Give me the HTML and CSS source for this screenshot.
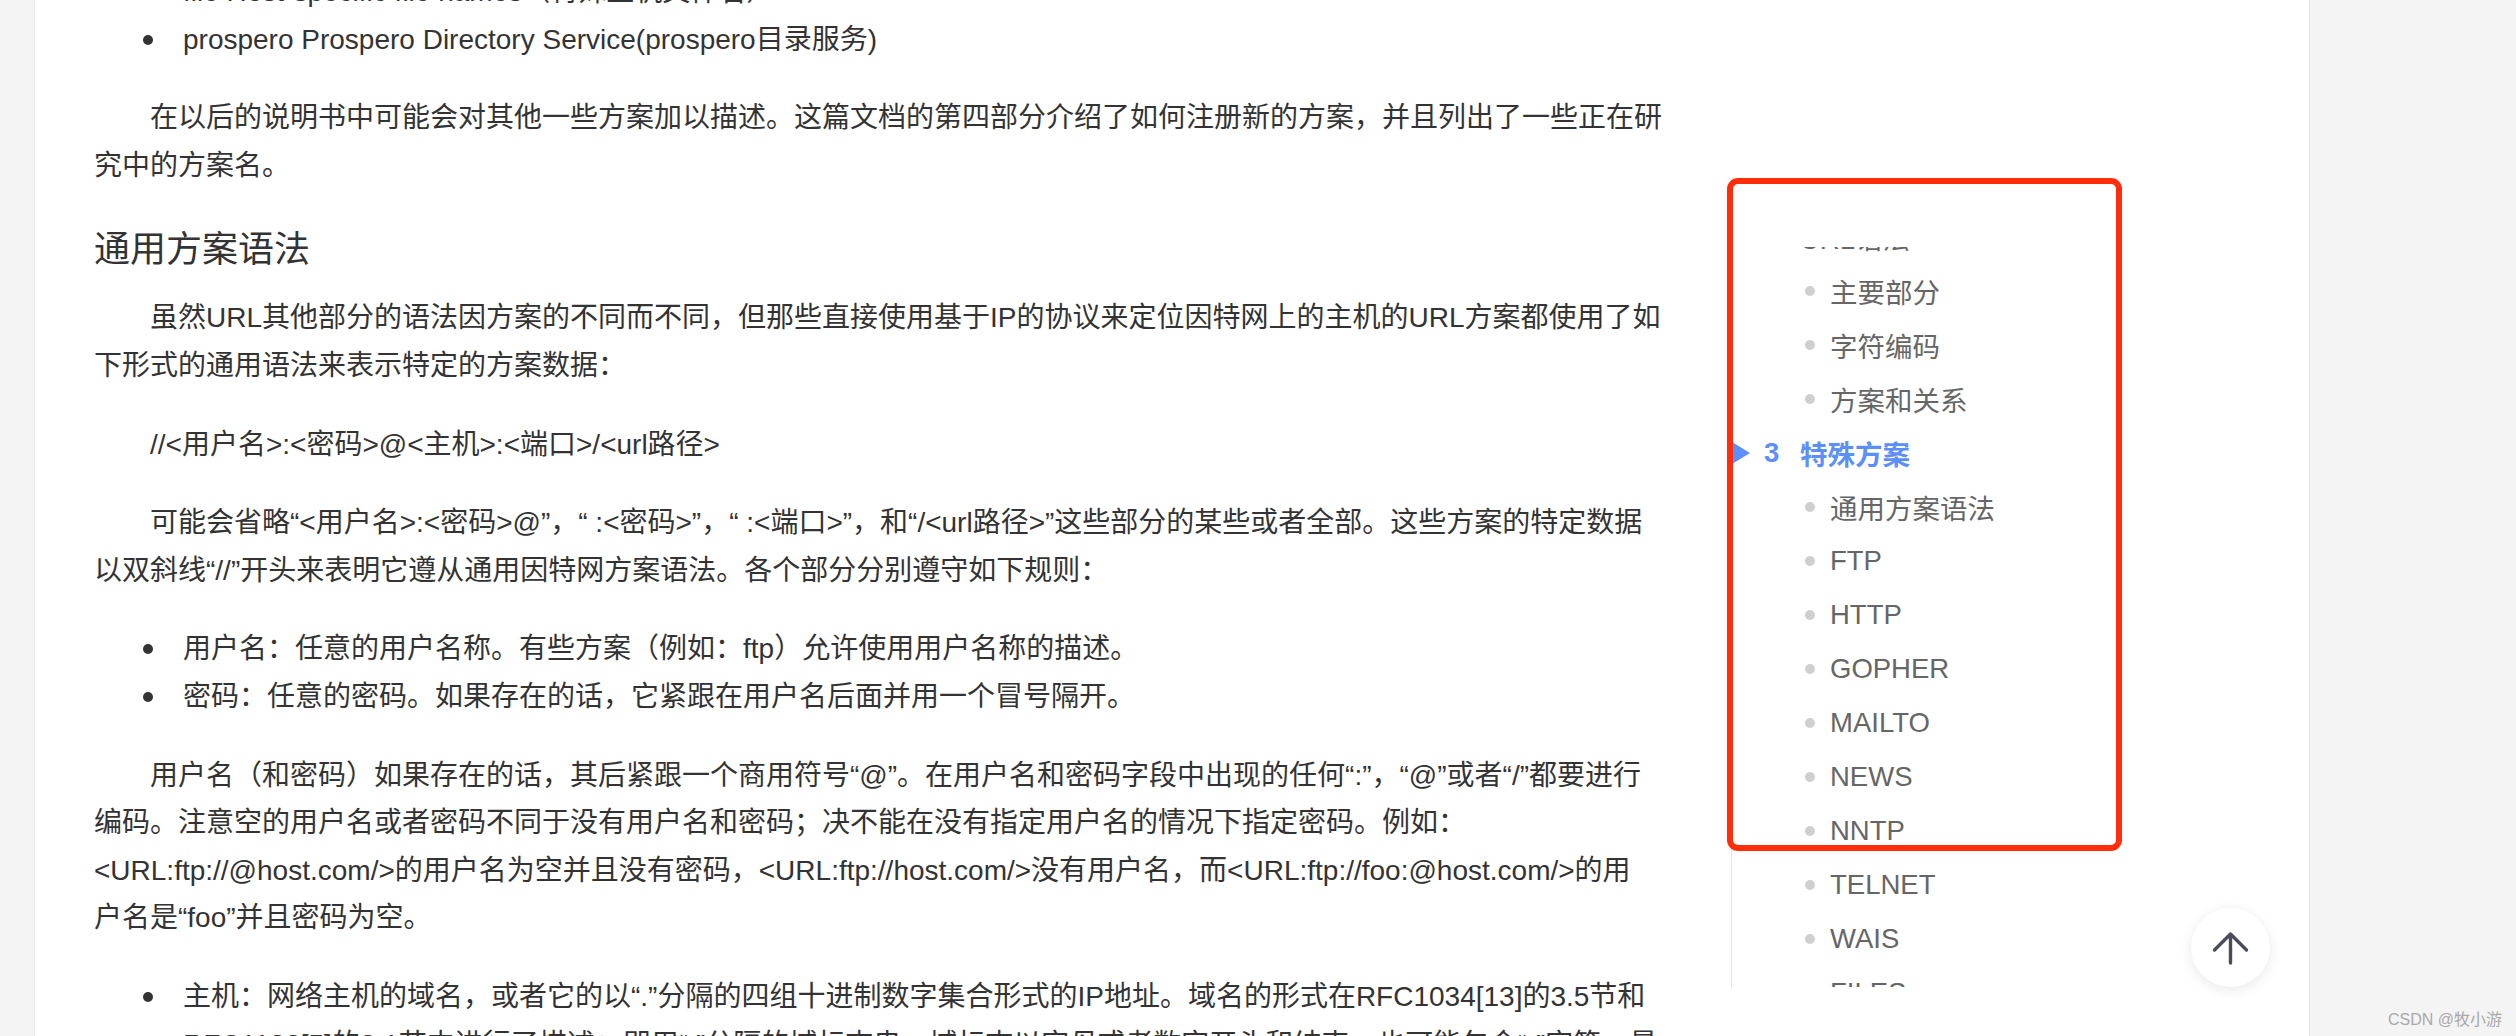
FILE: index.html
```html
<!DOCTYPE html>
<html lang="zh-CN">
<head>
<meta charset="utf-8">
<title>通用方案语法</title>
<link rel="stylesheet" href="styles.css">
</head>
<body>
<div class="page">
  <main class="panel">
    <article class="article">
      <ul class="list list-top">
        <li><span>file Host-specific file names（特殊主机文件名）</span></li>
        <li><span>prospero Prospero Directory Service(prospero目录服务)</span></li>
      </ul>
      <p class="para">在以后的说明书中可能会对其他一些方案加以描述。这篇文档的第四部分介绍了如何注册新的方案，并且列出了一些正在研<br>究中的方案名。</p>
      <h2 class="heading">通用方案语法</h2>
      <p class="para">虽然URL其他部分的语法因方案的不同而不同，但那些直接使用基于IP的协议来定位因特网上的主机的URL方案都使用了如<br>下形式的通用语法来表示特定的方案数据：</p>
      <p class="para">//&lt;用户名&gt;:&lt;密码&gt;@&lt;主机&gt;:&lt;端口&gt;/&lt;url路径&gt;</p>
      <p class="para">可能会省略“&lt;用户名&gt;:&lt;密码&gt;@”，“ :&lt;密码&gt;”，“ :&lt;端口&gt;”，和“/&lt;url路径&gt;”这些部分的某些或者全部。这些方案的特定数据<br>以双斜线“//”开头来表明它遵从通用因特网方案语法。各个部分分别遵守如下规则：</p>
      <ul class="list">
        <li><span>用户名：任意的用户名称。有些方案（例如：ftp）允许使用用户名称的描述。</span></li>
        <li><span>密码：任意的密码。如果存在的话，它紧跟在用户名后面并用一个冒号隔开。</span></li>
      </ul>
      <p class="para">用户名（和密码）如果存在的话，其后紧跟一个商用符号“@”。在用户名和密码字段中出现的任何“:”，“@”或者“/”都要进行<br>编码。注意空的用户名或者密码不同于没有用户名和密码；决不能在没有指定用户名的情况下指定密码。例如：<br>&lt;URL:ftp://@host.com/&gt;的用户名为空并且没有密码，&lt;URL:ftp://host.com/&gt;没有用户名，而&lt;URL:ftp://foo:@host.com/&gt;的用<br>户名是“foo”并且密码为空。</p>
      <ul class="list">
        <li><span>主机：网络主机的域名，或者它的以“.”分隔的四组十进制数字集合形式的IP地址。域名的形式在RFC1034[13]的3.5节和<br>RFC1123[5]的2.1节中进行了描述：即用“.”分隔的域标志串，域标志以字母或者数字开头和结束，也可能包含“-”字符。最</span></li>
      </ul>
    </article>
    <aside class="toc">
      <ul class="toc-list">
        <li class="toc-item toc-parent"><span class="caret"></span><span class="num">2</span><span class="label">URL语法</span></li>
        <li class="toc-item toc-sub"><span class="label">主要部分</span></li>
        <li class="toc-item toc-sub"><span class="label">字符编码</span></li>
        <li class="toc-item toc-sub"><span class="label">方案和关系</span></li>
        <li class="toc-item toc-parent is-active"><span class="caret"><svg class="caret-icon" viewBox="0 0 18 22" width="18" height="22"><polygon points="0,0 18,11 0,22" fill="#5c8ffa"/></svg></span><span class="num">3</span><span class="label">特殊方案</span></li>
        <li class="toc-item toc-sub"><span class="label">通用方案语法</span></li>
        <li class="toc-item toc-sub"><span class="label">FTP</span></li>
        <li class="toc-item toc-sub"><span class="label">HTTP</span></li>
        <li class="toc-item toc-sub"><span class="label">GOPHER</span></li>
        <li class="toc-item toc-sub"><span class="label">MAILTO</span></li>
        <li class="toc-item toc-sub"><span class="label">NEWS</span></li>
        <li class="toc-item toc-sub"><span class="label">NNTP</span></li>
        <li class="toc-item toc-sub"><span class="label">TELNET</span></li>
        <li class="toc-item toc-sub"><span class="label">WAIS</span></li>
        <li class="toc-item toc-sub"><span class="label">FILES</span></li>
      </ul>
    </aside>
  </main>
  <div class="annot"></div>
  <button class="backtop" type="button" aria-label="回到顶部">
    <svg viewBox="0 0 79 79" width="79" height="79"><path d="M39.5 26 V55 M23.5 42 L39.5 26 L55.5 42" fill="none" stroke="#4a4d5c" stroke-width="3.4" stroke-linecap="round" stroke-linejoin="round"/></svg>
  </button>
  <div class="watermark">CSDN @牧小游</div>
</div>
</body>
</html>
```

FILE: styles.css
```css
* { box-sizing: border-box; }
html, body { margin: 0; padding: 0; }
body {
  background: #f4f4f4;
  font-family: "Liberation Sans", "Noto Sans CJK SC", sans-serif;
  color: #333;
}
.page {
  position: relative;
  width: 2516px;
  height: 1036px;
  overflow: hidden;
  display: flex;
  padding-left: 34px;
}
.panel {
  width: 2276px;
  height: 1036px;
  background: #fff;
  border-left: 1px solid #ececec;
  border-right: 1px solid #e6e6e6;
  display: flex;
  align-items: flex-start;
  overflow: hidden;
}
.article {
  flex: none;
  width: 1600px;
  margin-left: 59px;
  font-size: 28px;
  line-height: 47.6px;
}
.para {
  margin: 0 0 31px;
  text-indent: 56px;
}
.heading {
  margin: 36px 0 19px;
  font-size: 36px;
  line-height: 50px;
  font-weight: 400;
  color: #333;
}
.list {
  list-style: none;
  margin: 0 0 31px;
  padding-left: 89px;
}
.list-top { margin-top: -32px; }
.list li {
  display: flex;
  align-items: flex-start;
}
.list li::before {
  content: "";
  flex: none;
  width: 10px;
  height: 10px;
  border-radius: 50%;
  background: #333;
  margin: 19px 30px 0 -40px;
}
.toc {
  flex: none;
  width: 420px;
  height: 740px;
  margin-left: 37px;
  margin-top: 247px;
  border-left: 1px solid #e4e4e4;
  overflow: hidden;
}
.toc-list {
  list-style: none;
  margin: -37px 0 0;
  padding: 0;
}
.toc-item {
  display: flex;
  align-items: center;
  height: 54px;
  font-size: 27.5px;
  color: #666;
  white-space: nowrap;
}
.toc-sub { padding-left: 73px; }
.toc-sub::before {
  content: "";
  flex: none;
  width: 10px;
  height: 10px;
  border-radius: 50%;
  background: #cfcfcf;
  margin-right: 15px;
}
.caret {
  flex: none;
  width: 32px;
  height: 22px;
  display: flex;
  align-items: center;
}
.caret-icon { display: block; }
.num {
  flex: none;
  width: 36px;
}
.is-active {
  color: #5c8ffa;
  font-weight: 700;
}
.annot {
  position: absolute;
  left: 1727px;
  top: 178px;
  width: 395px;
  height: 673px;
  border: 6px solid #ff2d0a;
  border-radius: 11px;
  pointer-events: none;
}
.backtop {
  position: absolute;
  left: 2191px;
  top: 908px;
  width: 79px;
  height: 79px;
  padding: 0;
  border: none;
  border-radius: 50%;
  background: #fff;
  box-shadow: 0 3px 14px rgba(0, 0, 0, 0.09);
  display: flex;
  align-items: center;
  justify-content: center;
}
.backtop svg { display: block; }
.watermark {
  position: absolute;
  right: 14px;
  bottom: 6px;
  font-size: 16px;
  line-height: 20px;
  color: #a8a8a8;
}
```
